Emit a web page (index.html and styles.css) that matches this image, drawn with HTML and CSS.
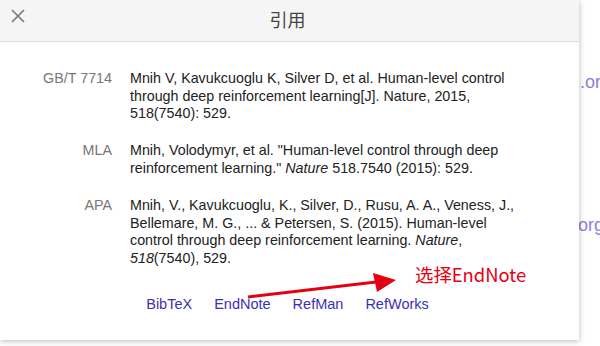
FILE: index.html
```html
<!DOCTYPE html>
<html lang="zh">
<head>
<meta charset="utf-8">
<link rel="stylesheet" href="styles.css">
</head>
<body>
<div class="page">
  <div class="bg-line bg-line-1">.org</div>
  <div class="bg-line bg-line-2">org</div>
</div>
<div class="dialog">
  <div class="header">
    <svg class="close" width="14" height="14" viewBox="0 0 14 14"><path d="M1 1 L13 13 M13 1 L1 13" stroke="#777" stroke-width="1.6" fill="none"/></svg>
    <div class="title">引用</div>
  </div>
  <div class="body">
    <div class="cites">
      <div class="label">GB/T 7714</div>
      <div class="cite">Mnih V, Kavukcuoglu K, Silver D, et al. Human-level control through deep reinforcement learning[J]. Nature, 2015, 518(7540): 529.</div>
      <div class="label">MLA</div>
      <div class="cite">Mnih, Volodymyr, et al. "Human-level control through deep reinforcement learning." <i>Nature</i> 518.7540 (2015): 529.</div>
      <div class="label">APA</div>
      <div class="cite">Mnih, V., Kavukcuoglu, K., Silver, D., Rusu, A. A., Veness, J., Bellemare, M. G., ... &amp; Petersen, S. (2015). Human-level control through deep reinforcement learning. <i>Nature</i>, <i>518</i>(7540), 529.</div>
    </div>
    <div class="links">
      <a class="link">BibTeX</a>
      <a class="link">EndNote</a>
      <a class="link">RefMan</a>
      <a class="link">RefWorks</a>
    </div>
  </div>
  <svg class="arrow" width="600" height="346" viewBox="0 0 600 346"><path d="M248 297 L376 282" stroke="#e60012" stroke-width="3" fill="none"/><path d="M373 273 L377 292 L396 280 Z" fill="#e60012"/></svg>
  <div class="note">选择EndNote</div>
</div>
</body>
</html>
```
FILE: styles.css
```css
html, body {
  margin: 0;
  padding: 0;
  background: #fff;
}
body {
  width: 600px;
  height: 346px;
  overflow: hidden;
  position: relative;
  font-family: "Liberation Sans", Arial, sans-serif;
}
.page {
  padding-top: 72px;
}
.bg-line {
  padding-left: 580px;
  white-space: nowrap;
  font-size: 18px;
  color: #8b80d8;
  line-height: 20px;
}
.bg-line-2 {
  margin-top: 123px;
  padding-left: 578px;
}
.dialog {
  position: absolute;
  left: 0;
  top: 0;
  width: 579px;
  height: 340px;
  background: #fff;
  box-shadow: 0 1px 6px rgba(0,0,0,0.28);
}
.header {
  height: 41px;
  background: #f5f5f5;
  border-bottom: 1px solid #dcdcdc;
  display: flex;
  align-items: center;
  justify-content: center;
  position: relative;
}
.close {
  position: absolute;
  left: 11px;
  top: 9px;
}
.title {
  font-family: "Noto Sans CJK SC", sans-serif;
  font-size: 18px;
  color: #444;
  margin-top: -4px;
  margin-right: 4px;
}
.body {
  padding-top: 28px;
}
.cites {
  display: grid;
  grid-template-columns: 112px 400px;
  column-gap: 18px;
  row-gap: 19.5px;
  font-size: 14.3px;
  line-height: 17.6px;
}
.label {
  text-align: right;
  color: #777;
}
.cite {
  color: #222;
}
.links {
  display: flex;
  justify-content: center;
  gap: 22px;
  margin-top: 28px;
  padding-right: 4px;
  font-size: 14.5px;
  line-height: 18px;
}
.link {
  color: #3b2fb5;
}
.arrow {
  position: absolute;
  left: 0;
  top: 0;
}
.note {
  position: absolute;
  left: 415px;
  top: 262px;
  font-family: "Noto Sans CJK SC", sans-serif;
  font-size: 18.4px;
  color: #e60012;
  line-height: 24px;
}
```
